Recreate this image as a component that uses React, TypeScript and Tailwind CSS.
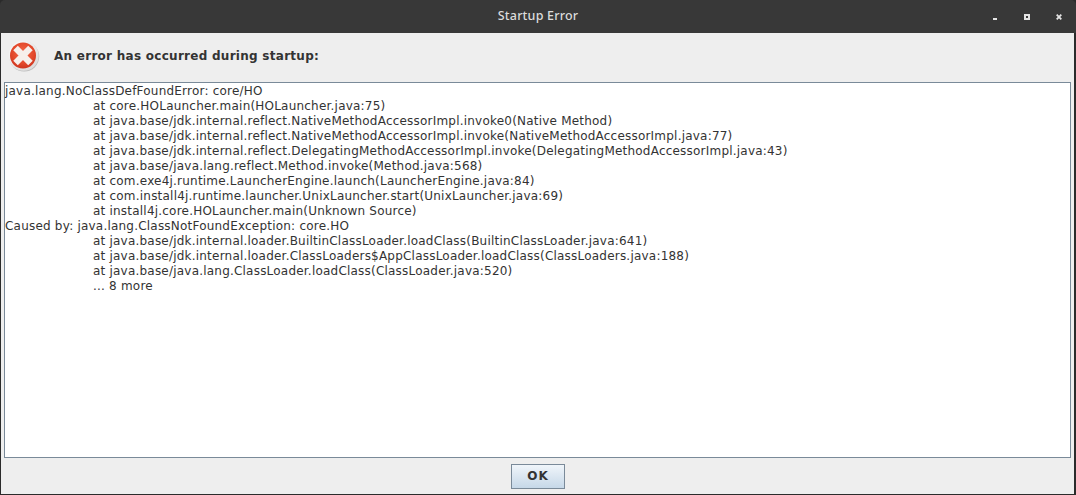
const lines: [boolean, string][] = [
  [false, "java.lang.NoClassDefFoundError: core/HO"],
  [true, "at core.HOLauncher.main(HOLauncher.java:75)"],
  [true, "at java.base/jdk.internal.reflect.NativeMethodAccessorImpl.invoke0(Native Method)"],
  [true, "at java.base/jdk.internal.reflect.NativeMethodAccessorImpl.invoke(NativeMethodAccessorImpl.java:77)"],
  [true, "at java.base/jdk.internal.reflect.DelegatingMethodAccessorImpl.invoke(DelegatingMethodAccessorImpl.java:43)"],
  [true, "at java.base/java.lang.reflect.Method.invoke(Method.java:568)"],
  [true, "at com.exe4j.runtime.LauncherEngine.launch(LauncherEngine.java:84)"],
  [true, "at com.install4j.runtime.launcher.UnixLauncher.start(UnixLauncher.java:69)"],
  [true, "at install4j.core.HOLauncher.main(Unknown Source)"],
  [false, "Caused by: java.lang.ClassNotFoundException: core.HO"],
  [true, "at java.base/jdk.internal.loader.BuiltinClassLoader.loadClass(BuiltinClassLoader.java:641)"],
  [true, "at java.base/jdk.internal.loader.ClassLoaders$AppClassLoader.loadClass(ClassLoaders.java:188)"],
  [true, "at java.base/java.lang.ClassLoader.loadClass(ClassLoader.java:520)"],
  [true, "... 8 more"],
];

function ErrorIcon() {
  return (
    <svg width="32" height="32" viewBox="0 0 32 32" className="block">
      <defs>
        <radialGradient id="red" cx="50%" cy="40%" r="65%">
          <stop offset="0%" stopColor="#f4694a" />
          <stop offset="65%" stopColor="#e2472a" />
          <stop offset="100%" stopColor="#c8321e" />
        </radialGradient>
        <linearGradient id="ring" x1="0" y1="0" x2="1" y2="1">
          <stop offset="0%" stopColor="#fbfbfb" />
          <stop offset="100%" stopColor="#d8d8d8" />
        </linearGradient>
      </defs>
      <circle cx="16.2" cy="16.6" r="15" fill="#bdbdbd" />
      <circle cx="15.7" cy="15.8" r="15" fill="url(#ring)" />
      <circle cx="15" cy="15.5" r="13" fill="url(#red)" />
      <path d="M9.8 10.3 L20.2 20.7 M20.2 10.3 L9.8 20.7" stroke="#f7efeb" strokeWidth="6.4" strokeLinecap="square" />
    </svg>
  );
}

export default function App() {
  return (
    <div className="w-[1076px] h-[495px] flex flex-col overflow-hidden bg-[#2b2b2b] font-['DejaVu_Sans',sans-serif]">
      <div className="h-[33px] shrink-0 relative flex items-center justify-center bg-[#383838] rounded-t-[5px] text-[#dcdcdc]">
        <span className="font-['Noto_Sans',sans-serif] text-[12.5px] font-medium tracking-[0.2px]">Startup Error</span>
        <div className="absolute right-0 top-0 h-full w-[90px]">
          <div className="absolute right-[79px] top-[18px] w-[4px] h-[2px] bg-[#e4e4e4]" />
          <div className="absolute right-[46px] top-[14px] w-[6px] h-[6px] border-2 border-[#e4e4e4] bg-[#383838]" />
          <svg className="absolute right-[14px] top-[14px]" width="6" height="6" viewBox="0 0 6 6">
            <path d="M0.7 0.7 L5.3 5.3 M5.3 0.7 L0.7 5.3" stroke="#e4e4e4" strokeWidth="1.8" />
          </svg>
        </div>
      </div>
      <div className="flex-1 min-h-0 ml-px mr-[2px] mb-px flex flex-col bg-[#eeeeee] pt-[7px] px-[3px]">
        <div className="h-[32px] shrink-0 flex items-center ml-[4px] gap-[14px]">
          <ErrorIcon />
          <span className="text-[12px] font-bold text-[#333333] tracking-[0.27px]">An error has occurred during startup:</span>
        </div>
        <div className="flex-1 mt-[10px] min-h-0 border border-[#7a8a99] bg-white pt-px text-[12px] leading-[15px] tracking-[0.21px] text-[#333333]">
          {lines.map(([indent, text], i) => (
            <div key={i} className={indent ? "pl-[88px] whitespace-pre" : "whitespace-pre"}>{text}</div>
          ))}
        </div>
        <div className="h-[36px] shrink-0 flex items-center justify-center">
          <button className="w-[54px] h-[25px] border border-[#7a8a99] bg-gradient-to-b from-[#f0f5fa] to-[#c6d8e8] text-[12px] font-bold text-[#333333] tracking-[0.9px] pl-px">OK</button>
        </div>
      </div>
    </div>
  );
}
